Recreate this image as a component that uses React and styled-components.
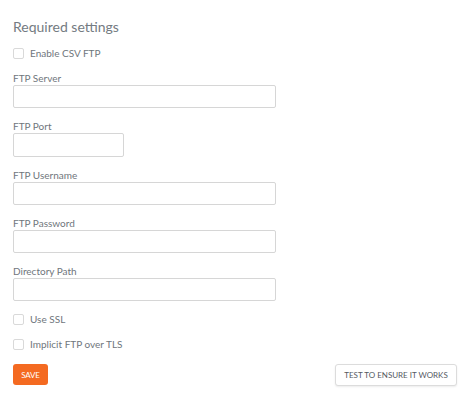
import React from "react";
import styled, { createGlobalStyle } from "styled-components";

const Global = createGlobalStyle`
  html, body { margin: 0; padding: 0; background: #fff; }
  body { font-family: Lato, "Open Sans", Arial, sans-serif; }
  * { box-sizing: border-box; }
`;

const Page = styled.div`
  width: 474px;
  height: 415px;
  padding: 18px 17px 0 13px;
  display: flex;
  flex-direction: column;
`;

const Title = styled.h2`
  margin: 0;
  font-size: 14px;
  line-height: 18px;
  font-weight: 400;
  color: #747b82;
`;

const CheckRow = styled.label`
  display: flex;
  align-items: center;
  gap: 6px;
  height: 12px;
  margin-top: ${(p) => p.$mt || 0}px;
  font-size: 10px;
  color: #6f767c;
`;

const Box = styled.span`
  width: 11px;
  height: 11px;
  border: 1px solid #d9d9d9;
  border-radius: 2px;
  background: #fff;
  flex: none;
`;

const Field = styled.div`
  display: flex;
  flex-direction: column;
  margin-top: ${(p) => p.$mt || 0}px;
  margin-bottom: 12px;
`;

const Label = styled.div`
  font-size: 10px;
  line-height: 12px;
  color: #6f767c;
  margin-bottom: 1px;
`;

const Input = styled.div`
  width: ${(p) => p.$w}px;
  height: ${(p) => p.$h || 23}px;
  border: 1px solid #d6d6d6;
  border-radius: 2px;
  background: #fff;
`;

const Actions = styled.div`
  display: flex;
  justify-content: space-between;
  align-items: flex-start;
  margin-top: 14px;
`;

const SaveButton = styled.button`
  width: 35px;
  height: 21px;
  padding: 0;
  border: none;
  border-radius: 3px;
  background: #f46a21;
  color: #fff;
  font-family: Lato, Arial, sans-serif;
  font-size: 8px;
  letter-spacing: -0.2px;
`;

const TestButton = styled.button`
  width: 122px;
  height: 22px;
  padding: 0;
  border: 1px solid #dcdcdc;
  border-radius: 3px;
  background: #fff;
  color: #555a5f;
  box-shadow: 0 1px 2px rgba(0, 0, 0, 0.08);
  font-family: Lato, Arial, sans-serif;
  font-size: 8px;
`;

const fields = [
  { label: "FTP Server", w: 263 },
  { label: "FTP Port", w: 111, h: 24 },
  { label: "FTP Username", w: 263 },
  { label: "FTP Password", w: 263 },
  { label: "Directory Path", w: 263 },
];

export default function App() {
  return (
    <Page>
      <Global />
      <Title>Required settings</Title>
      <CheckRow $mt={11}>
        <Box />
        Enable CSV FTP
      </CheckRow>
      {fields.map((f, i) => (
        <Field key={f.label} $mt={i === 0 ? 13 : 0}>
          <Label>{f.label}</Label>
          <Input $w={f.w} $h={f.h} />
        </Field>
      ))}
      <CheckRow>
        <Box />
        Use SSL
      </CheckRow>
      <CheckRow $mt={13}>
        <Box />
        Implicit FTP over TLS
      </CheckRow>
      <Actions>
        <SaveButton>SAVE</SaveButton>
        <TestButton>TEST TO ENSURE IT WORKS</TestButton>
      </Actions>
    </Page>
  );
}
